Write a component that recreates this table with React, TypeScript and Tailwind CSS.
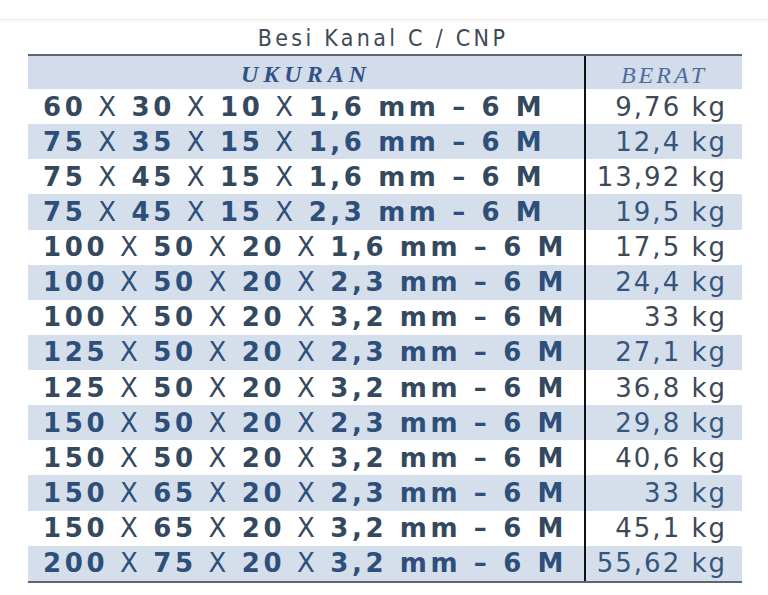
import React from "react";

type Row = { size: string; weight: string };

const rows: Row[] = [
  { size: "60 X 30 X 10 X 1,6 mm – 6 M", weight: "9,76 kg" },
  { size: "75 X 35 X 15 X 1,6 mm – 6 M", weight: "12,4 kg" },
  { size: "75 X 45 X 15 X 1,6 mm – 6 M", weight: "13,92 kg" },
  { size: "75 X 45 X 15 X 2,3 mm – 6 M", weight: "19,5 kg" },
  { size: "100 X 50 X 20 X 1,6 mm – 6 M", weight: "17,5 kg" },
  { size: "100 X 50 X 20 X 2,3 mm – 6 M", weight: "24,4 kg" },
  { size: "100 X 50 X 20 X 3,2 mm – 6 M", weight: "33 kg" },
  { size: "125 X 50 X 20 X 2,3 mm – 6 M", weight: "27,1 kg" },
  { size: "125 X 50 X 20 X 3,2 mm – 6 M", weight: "36,8 kg" },
  { size: "150 X 50 X 20 X 2,3 mm – 6 M", weight: "29,8 kg" },
  { size: "150 X 50 X 20 X 3,2 mm – 6 M", weight: "40,6 kg" },
  { size: "150 X 65 X 20 X 2,3 mm – 6 M", weight: "33 kg" },
  { size: "150 X 65 X 20 X 3,2 mm – 6 M", weight: "45,1 kg" },
  { size: "200 X 75 X 20 X 3,2 mm – 6 M", weight: "55,62 kg" },
];

// the X separators are drawn thinner than the numbers
const SizeText: React.FC<{ text: string }> = ({ text }) => {
  const parts = text.split(" X ");
  return (
    <span>
      {parts.map((p, i) => (
        <React.Fragment key={i}>
          {i > 0 && <span className="font-normal"> X </span>}
          {p}
        </React.Fragment>
      ))}
    </span>
  );
};

export default function App() {
  return (
    <div className="w-[768px] h-[595px] bg-white overflow-hidden font-['DejaVu_Sans',sans-serif]">
      <div className="h-[20px] border-b border-[#eeeeee] shadow-[0_1px_3px_rgba(0,0,0,0.06)]" />
      <div className="ml-[28px] w-[714px]">
        <div className="h-[34px] flex items-end justify-center pb-[4px] pr-[4px] text-[23px] leading-none tracking-[3.3px] text-[#3e4a56] font-['DejaVu_Sans_Condensed','DejaVu_Sans',sans-serif]">
          Besi Kanal C / CNP
        </div>
        <div className="border-t-2 border-b-2 border-[#5d6670]">
          <div className="flex h-[33px] bg-[#d3dcea]">
            <div className="flex-1 flex items-center justify-center pt-[2px] font-['Liberation_Serif',serif] italic font-bold text-[24px] tracking-[5px] text-[#2f5287]">
              UKURAN
            </div>
            <div className="w-[158px] border-l-2 border-[#111111] flex items-center justify-center pt-[4px] font-['Liberation_Serif',serif] italic text-[24px] tracking-[3px] text-[#4d6d9c]">
              BERAT
            </div>
          </div>
          {rows.map((r, i) => {
            const blue = i % 2 === 1;
            return (
              <div
                key={i}
                className={`flex h-[35.14px] ${blue ? "bg-[#d5deeb]" : "bg-white"}`}
              >
                <div
                  className={`flex-1 flex items-center pl-[15px] font-bold text-[26px] leading-none tracking-[3.6px] whitespace-nowrap ${
                    blue ? "text-[#2d4f7a]" : "text-[#34495e]"
                  }`}
                >
                  <SizeText text={r.size} />
                </div>
                <div
                  className={`w-[158px] border-l-2 border-[#111111] flex items-center justify-end pr-[15px] text-[26px] leading-none tracking-[2px] whitespace-nowrap ${
                    blue ? "text-[#35557c]" : "text-[#3d4a56]"
                  }`}
                >
                  {r.weight}
                </div>
              </div>
            );
          })}
        </div>
      </div>
    </div>
  );
}
